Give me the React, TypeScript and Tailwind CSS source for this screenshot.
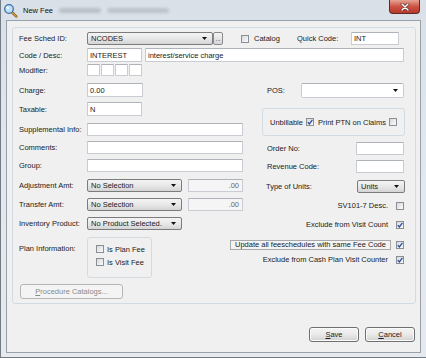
import React from "react";

const Arrow = () => (
  <svg width="5" height="3" viewBox="0 0 5 3" className="shrink-0">
    <path d="M0 0 H5 L2.5 3 Z" fill="#111" />
  </svg>
);

const Cb = ({ checked }: { checked?: boolean }) => (
  <span className="relative flex w-[8px] h-[8px] shrink-0 border border-[#8b8e92] bg-gradient-to-br from-[#d6d9de] to-[#fbfbfb]">
    {checked && (
      <svg width="8" height="8" viewBox="0 0 8 8" className="absolute -left-[1px] -top-[1px]">
        <path d="M1.8 4.2 L3.4 5.9 L6.4 1.8" stroke="#2c4f9e" strokeWidth="1.3" fill="none" />
      </svg>
    )}
  </span>
);

const TB = ({ w, h = 13, children, right, disabled }: { w: string; h?: number; children?: React.ReactNode; right?: boolean; disabled?: boolean }) => (
  <div
    className={`${w} ${h === 14 ? "h-[14px]" : h === 12 ? "h-[12px]" : "h-[13px]"} shrink-0 flex items-center border border-[#c9cdd3] border-t-[#aeb2b9] rounded-[1px] ${
      disabled ? "bg-[#f5f5f5] text-[#6b6b6b]" : "bg-white"
    } ${right ? "justify-end pr-[3px]" : "pl-[2px]"} overflow-hidden whitespace-nowrap`}
  >
    {children}
  </div>
);

const Combo = ({ w, children, white }: { w: string; children?: React.ReactNode; white?: boolean }) => (
  <div
    className={`${w} h-[13px] shrink-0 flex items-center justify-between pl-[3px] pr-[5px] rounded-[2px] whitespace-nowrap overflow-hidden ${
      white
        ? "bg-white border border-[#c9cdd3] border-t-[#aeb2b9]"
        : "border border-[#7c7c7c] bg-gradient-to-b from-[#f4f4f4] via-[#e8e8e8] to-[#d4d4d4]"
    }`}
  >
    <span>{children}</span>
    <Arrow />
  </div>
);

const Label = ({ w, children, cls = "" }: { w: string; children: React.ReactNode; cls?: string }) => (
  <span className={`${w} shrink-0 whitespace-nowrap ${cls}`}>{children}</span>
);

const Btn = ({ w, children, disabled }: { w: string; children: React.ReactNode; disabled?: boolean }) => (
  <div
    className={`${w} h-[15px] flex items-center justify-center rounded-[3px] border ${
      disabled
        ? "border-[#b3b7ba] bg-[#f4f4f4] text-[#8a8a8a]"
        : "border-[#707070] bg-gradient-to-b from-[#f4f4f4] via-[#e9e9e9] to-[#d2d2d2] shadow-[inset_0_0_0_1px_#fbfbfb]"
    }`}
  >
    {children}
  </div>
);

export default function App() {
  return (
    <div className="w-[426px] h-[358px] overflow-hidden font-['Liberation_Sans',Arial,sans-serif] text-[7.5px] leading-[9px] text-[#1b1b1b]">
      <div className="relative w-full h-full flex flex-col border-l border-b border-[#737b84] bg-gradient-to-b from-[#d9e0e8] via-[#e3e8ee] to-[#e6eaef]">
        {/* title bar */}
        <div className="relative h-[20px] shrink-0 flex items-center pl-[2px]">
          <svg width="15" height="15" viewBox="0 0 15 15" className="shrink-0">
            <path d="M8.6 8.8 L13.2 13.4" stroke="#8a5a1c" strokeWidth="2.6" strokeLinecap="round" />
            <path d="M8.6 8.8 L13.2 13.4" stroke="#e0a040" strokeWidth="1.2" strokeLinecap="round" />
            <circle cx="6" cy="6" r="4.3" fill="#bfe0f7" stroke="#3a6fae" strokeWidth="1.3" />
            <circle cx="4.8" cy="4.8" r="1.4" fill="#ffffff" opacity="0.8" />
          </svg>
          <span className="ml-[5px] text-[7.5px] text-[#111]">New Fee</span>
          <div className="ml-[6px] flex items-center gap-[6px] blur-[1.6px] opacity-70">
            <span className="w-[42px] h-[5px] rounded bg-[#a9b1ba]" />
            <span className="w-[62px] h-[5px] rounded bg-[#b0b7bf]" />
          </div>
          <div className="absolute right-[6px] top-0 w-[31px] h-[14px] rounded-b-[4px] border border-t-0 border-[#5d2a25] bg-gradient-to-b from-[#e6a394] via-[#cc5345] to-[#b8382c] flex items-center justify-center">
            <svg width="10" height="8" viewBox="0 0 10 8">
              <path d="M2 1 L8 7 M8 1 L2 7" stroke="#5a2620" strokeWidth="2.8" strokeLinecap="round" />
              <path d="M2 1 L8 7 M8 1 L2 7" stroke="#ffffff" strokeWidth="1.5" strokeLinecap="round" />
            </svg>
          </div>
        </div>

        {/* client area */}
        <div className="ml-[5px] mr-[5px] mb-[4px] flex-1 flex flex-col border border-[#98a1aa] bg-[#f0f0f0]">
          {/* main group panel */}
          <div className="ml-[5px] mr-[4px] mt-[6px] h-[277px] flex flex-col rounded-[3px] border border-[#d3dbe2] pl-[6px] pt-[4px]">
            {/* row 1 */}
            <div className="flex items-center h-[13px]">
              <Label w="w-[68px]">Fee Sched ID:</Label>
              <Combo w="w-[126px]">NCODES</Combo>
              <div className="w-[10px] h-[13px] shrink-0 flex items-end justify-center pb-[2px] rounded-[2px] border border-[#8a8a8a] bg-gradient-to-b from-[#f4f4f4] to-[#d6d6d6] text-[6px] leading-[6px]">
                ...
              </div>
              <span className="w-[18px] shrink-0" />
              <Cb />
              <Label w="w-[48px]" cls="pl-[5px]">Catalog</Label>
              <Label w="w-[54px]">Quick Code:</Label>
              <TB w="w-[48px]">INT</TB>
            </div>
            {/* row 2 */}
            <div className="flex items-center h-[14px] mt-[3px]">
              <Label w="w-[68px]">Code / Desc:</Label>
              <TB w="w-[55px]" h={14}>INTEREST</TB>
              <span className="w-[3px] shrink-0" />
              <TB w="w-[259px]" h={14}>interest/service charge</TB>
            </div>
            {/* row 3 */}
            <div className="flex items-center h-[12px] mt-[2px]">
              <Label w="w-[68px]">Modifier:</Label>
              <div className="flex gap-[1px]">
                <TB w="w-[13px]" h={12} />
                <TB w="w-[13px]" h={12} />
                <TB w="w-[13px]" h={12} />
                <TB w="w-[13px]" h={12} />
              </div>
            </div>

            {/* two columns */}
            <div className="flex mt-[7px]">
              {/* left column */}
              <div className="w-[224px] shrink-0 flex flex-col">
                <div className="flex items-center h-[14px]">
                  <Label w="w-[68px]">Charge:</Label>
                  <TB w="w-[56px]" h={14}>0.00</TB>
                </div>
                <div className="flex items-center h-[14px] mt-[5px]">
                  <Label w="w-[68px]">Taxable:</Label>
                  <TB w="w-[55px]" h={14}>N</TB>
                </div>
                <div className="flex items-center h-[13px] mt-[7px]">
                  <Label w="w-[68px]">Supplemental Info:</Label>
                  <TB w="w-[156px]" />
                </div>
                <div className="flex items-center h-[13px] mt-[5px]">
                  <Label w="w-[68px]">Comments:</Label>
                  <TB w="w-[156px]" />
                </div>
                <div className="flex items-center h-[13px] mt-[5px]">
                  <Label w="w-[68px]">Group:</Label>
                  <TB w="w-[156px]" />
                </div>
                <div className="flex items-center h-[13px] mt-[7px]">
                  <Label w="w-[68px]">Adjustment Amt:</Label>
                  <Combo w="w-[95px]">No Selection</Combo>
                  <span className="w-[6px] shrink-0" />
                  <TB w="w-[55px]" right disabled>.00</TB>
                </div>
                <div className="flex items-center h-[13px] mt-[6px]">
                  <Label w="w-[68px]">Transfer Amt:</Label>
                  <Combo w="w-[95px]">No Selection</Combo>
                  <span className="w-[6px] shrink-0" />
                  <TB w="w-[55px]" right disabled>.00</TB>
                </div>
                <div className="flex items-center h-[13px] mt-[6px]">
                  <Label w="w-[68px]">Inventory Product:</Label>
                  <Combo w="w-[95px]">No Product Selected.</Combo>
                </div>
                <div className="flex items-start mt-[7px]">
                  <Label w="w-[68px]" cls="pt-[7px]">Plan Information:</Label>
                  <div className="w-[65px] h-[41px] rounded-[3px] border border-[#d3dbe2] pl-[8px] pt-[5px] flex flex-col gap-[1px]">
                    <div className="flex items-center h-[12px] gap-[3px]">
                      <Cb />
                      <span>Is Plan Fee</span>
                    </div>
                    <div className="flex items-center h-[12px] gap-[3px]">
                      <Cb />
                      <span>Is Visit Fee</span>
                    </div>
                  </div>
                </div>
                <div className="mt-[6px] ml-[1px]">
                  <Btn w="w-[103px]" disabled>
                    <span>
                      <span className="underline">P</span>rocedure Catalogs...
                    </span>
                  </Btn>
                </div>
              </div>

              {/* right column */}
              <div className="ml-[19px] w-[143px] shrink-0 flex flex-col">
                <div className="flex items-center h-[15px]">
                  <Label w="w-[39px]" cls="pl-[5px]">POS:</Label>
                  <div className="w-[103px] h-[15px] shrink-0 flex items-center justify-end pr-[5px] bg-white border border-[#c9cdd3] border-t-[#aeb2b9] rounded-[2px]">
                    <Arrow />
                  </div>
                </div>
                <div className="mt-[10px] h-[28px] rounded-[3px] border border-[#d3dbe2] flex items-center pl-[7px]">
                  <Label w="w-[36px]">Unbillable</Label>
                  <Cb checked />
                  <Label w="w-[75px]" cls="pl-[4px]">Print PTN on Claims</Label>
                  <Cb />
                </div>
                <div className="flex items-center h-[13px] mt-[6px]">
                  <Label w="w-[94px]" cls="pl-[5px]">Order No:</Label>
                  <TB w="w-[48px]" />
                </div>
                <div className="flex items-center h-[13px] mt-[5px]">
                  <Label w="w-[94px]" cls="pl-[5px]">Revenue Code:</Label>
                  <TB w="w-[48px]" />
                </div>
                <div className="flex items-center h-[13px] mt-[7px]">
                  <Label w="w-[95px]" cls="pl-[4px]">Type of Units:</Label>
                  <Combo w="w-[48px]">Units</Combo>
                </div>
                <div className="flex items-center justify-end h-[13px] mt-[6px] pr-[1px] gap-[8px]">
                  <span className="whitespace-nowrap">SV101-7 Desc.</span>
                  <Cb />
                </div>
                <div className="flex items-center justify-end h-[13px] mt-[6px] pr-[1px] gap-[8px]">
                  <span className="whitespace-nowrap">Exclude from Visit Count</span>
                  <Cb checked />
                </div>
                <div className="flex items-center justify-end h-[13px] mt-[7px] pr-[1px] gap-[5px]">
                  <div className="w-[161px] h-[10px] shrink-0 flex items-center pl-[4px] border border-[#a9a9a9] bg-[#f3f3f3] whitespace-nowrap">
                    Update all feeschedules with same Fee Code
                  </div>
                  <Cb checked />
                </div>
                <div className="flex items-center justify-end h-[13px] mt-[2px] pr-[1px] gap-[8px]">
                  <span className="whitespace-nowrap">Exclude from Cash Plan Visit Counter</span>
                  <Cb checked />
                </div>
              </div>
            </div>
          </div>

          {/* buttons */}
          <div className="flex justify-end gap-[6px] mt-[23px] mr-[5px]">
            <Btn w="w-[50px]">
              <span>
                <span className="underline">S</span>ave
              </span>
            </Btn>
            <Btn w="w-[50px]">
              <span>
                <span className="underline">C</span>ancel
              </span>
            </Btn>
          </div>
        </div>
      </div>
    </div>
  );
}
